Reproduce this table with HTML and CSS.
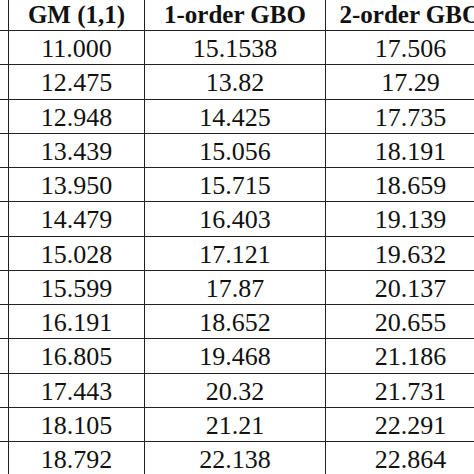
FILE: index.html
```html
<!DOCTYPE html>
<html>
<head>
<meta charset="utf-8">
<link rel="stylesheet" href="styles.css">
</head>
<body>
<div class="viewport">
  <div class="table">
    <div class="cell head"></div><div class="cell head">GM (1,1)</div><div class="cell head">1-order GBO</div><div class="cell head">2-order GBO</div>
    <div class="cell"></div><div class="cell">11.000</div><div class="cell">15.1538</div><div class="cell">17.506</div>
    <div class="cell"></div><div class="cell">12.475</div><div class="cell">13.82</div><div class="cell">17.29</div>
    <div class="cell"></div><div class="cell">12.948</div><div class="cell">14.425</div><div class="cell">17.735</div>
    <div class="cell"></div><div class="cell">13.439</div><div class="cell">15.056</div><div class="cell">18.191</div>
    <div class="cell"></div><div class="cell">13.950</div><div class="cell">15.715</div><div class="cell">18.659</div>
    <div class="cell"></div><div class="cell">14.479</div><div class="cell">16.403</div><div class="cell">19.139</div>
    <div class="cell"></div><div class="cell">15.028</div><div class="cell">17.121</div><div class="cell">19.632</div>
    <div class="cell"></div><div class="cell">15.599</div><div class="cell">17.87</div><div class="cell">20.137</div>
    <div class="cell"></div><div class="cell">16.191</div><div class="cell">18.652</div><div class="cell">20.655</div>
    <div class="cell"></div><div class="cell">16.805</div><div class="cell">19.468</div><div class="cell">21.186</div>
    <div class="cell"></div><div class="cell">17.443</div><div class="cell">20.32</div><div class="cell">21.731</div>
    <div class="cell"></div><div class="cell">18.105</div><div class="cell">21.21</div><div class="cell">22.291</div>
    <div class="cell"></div><div class="cell">18.792</div><div class="cell">22.138</div><div class="cell">22.864</div>
  </div>
</div>
</body>
</html>
```

FILE: styles.css
```css
html, body {
  margin: 0;
  padding: 0;
  background: #ffffff;
}
.viewport {
  width: 474px;
  height: 474px;
  overflow: hidden;
}
.table {
  display: grid;
  grid-template-columns: 9px 136px 181px 170px;
  grid-template-rows: 31px;
  grid-auto-rows: 34.25px;
  width: 496px;
  font-family: "Liberation Serif", "Times New Roman", serif;
  color: #111111;
}
.cell {
  box-sizing: border-box;
  border-right: 1px solid #222222;
  border-bottom: 1px solid #222222;
  text-align: center;
  font-size: 26px;
  line-height: 34px;
  padding-top: 1px;
  white-space: nowrap;
  overflow: hidden;
}
.head {
  font-size: 25px;
  font-weight: bold;
  line-height: 30px;
  padding-top: 0;
}
```
